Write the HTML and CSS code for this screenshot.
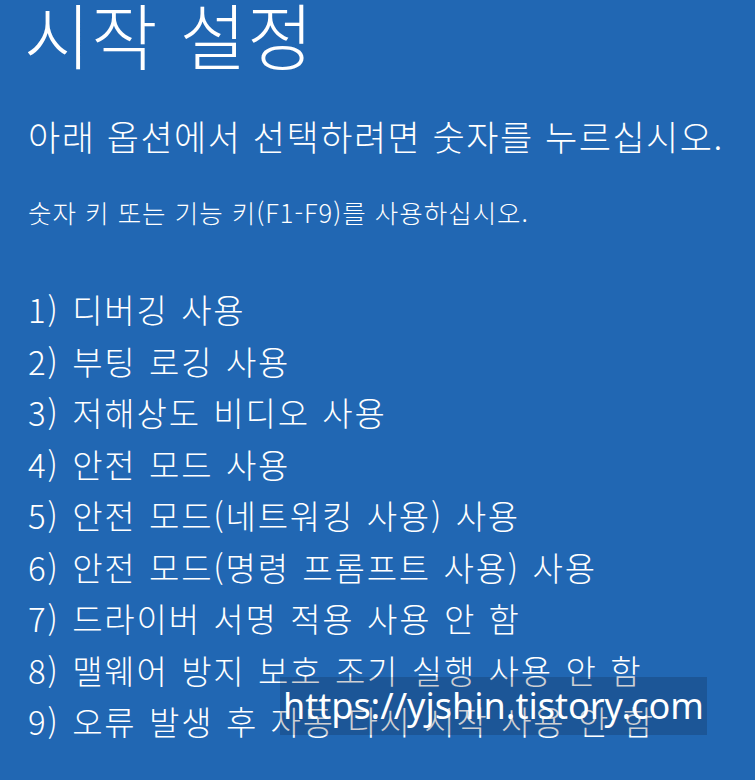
FILE: index.html
```html
<!DOCTYPE html>
<html lang="ko">
<head>
<meta charset="utf-8">
<title>시작 설정</title>
<link rel="stylesheet" href="styles.css">
</head>
<body>
<main class="screen">
  <h1 class="title">시작 설정</h1>
  <p class="lead">아래 옵션에서 선택하려면 숫자를 누르십시오.</p>
  <p class="hint">숫자 키 또는 기능 키(F1-F9)를 사용하십시오.</p>
  <ol class="options">
    <li>1) 디버깅 사용</li>
    <li>2) 부팅 로깅 사용</li>
    <li>3) 저해상도 비디오 사용</li>
    <li>4) 안전 모드 사용</li>
    <li>5) 안전 모드(네트워킹 사용) 사용</li>
    <li>6) 안전 모드(명령 프롬프트 사용) 사용</li>
    <li>7) 드라이버 서명 적용 사용 안 함</li>
    <li>8) 맬웨어 방지 보호 조기 실행 사용 안 함</li>
    <li>9) 오류 발생 후 자동 다시 시작 사용 안 함</li>
  </ol>
  <div class="watermark">https://yjshin.tistory.com</div>
</main>
</body>
</html>
```

FILE: styles.css
```css
html, body {
  margin: 0;
  padding: 0;
  background: #2167b3;
}

.screen {
  position: relative;
  width: 755px;
  height: 780px;
  overflow: hidden;
  box-sizing: border-box;
  padding: 0 0 0 27px;
  color: #ffffff;
  font-family: "Noto Sans CJK KR", "Noto Sans", sans-serif;
  font-weight: 300;
  background: #2167b3;
}

.title {
  margin: -10px 0 0 -3px;
  font-size: 72px;
  font-weight: 300;
  line-height: 86px;
  letter-spacing: 1px;
}

.lead {
  margin: 38px 0 0 1px;
  font-size: 35px;
  line-height: 44px;
  font-weight: 300;
  letter-spacing: 1.5px;
}

.hint {
  margin: 39px 0 0 1px;
  font-size: 25.5px;
  line-height: 30px;
  font-weight: 300;
  letter-spacing: 1px;
}

.options {
  list-style: none;
  margin: 57px 0 0 1px;
  padding: 0;
  font-size: 33px;
  line-height: 51.5px;
  letter-spacing: 1.8px;
  word-spacing: 1.5px;
}

.watermark {
  position: absolute;
  left: 280px;
  top: 677px;
  width: 427px;
  height: 58px;
  box-sizing: border-box;
  padding-left: 3px;
  background: rgba(8, 18, 40, 0.2);
  color: #ffffff;
  font-family: "Noto Sans", "Open Sans", sans-serif;
  font-weight: 400;
  font-size: 36px;
  line-height: 58px;
  white-space: nowrap;
}
```
